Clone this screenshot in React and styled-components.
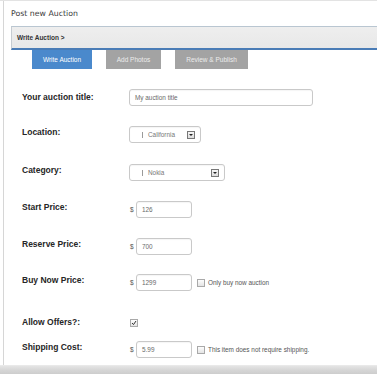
import React from 'react';
import styled, { createGlobalStyle } from 'styled-components';

const GlobalStyle = createGlobalStyle`
  html, body {
    margin: 0;
    padding: 0;
    background: #ffffff;
  }
  * {
    box-sizing: border-box;
  }
`;

const Page = styled.div`
  height: 374px;
  display: flex;
  flex-direction: column;
  overflow: hidden;
  border-top: 1px solid #e3e3e3;
  background: #fff;
  font-family: "Liberation Sans", Arial, sans-serif;
`;

const Panel = styled.div`
  flex: 1;
  margin-left: 3px;
  border-left: 1px solid #d6d6d6;
  padding-left: 7px;
  display: flex;
  flex-direction: column;
`;

const Title = styled.div`
  height: 25px;
  display: flex;
  align-items: center;
  font-family: "DejaVu Sans", Verdana, sans-serif;
  font-size: 7.8px;
  color: #3c3c3c;
`;

const Crumbs = styled.div`
  height: 24px;
  display: flex;
  align-items: center;
  padding-left: 5px;
  background: linear-gradient(#eeeeee, #e8e8e8);
  border-top: 1px solid #b9c6d1;
  border-left: 1px solid #c6ccd2;
  border-bottom: 2px solid #4a7cb6;
  font-size: 6.5px;
  font-weight: bold;
  color: #333;
`;

const Tabs = styled.div`
  display: flex;
  gap: 14px;
  padding-left: 21px;
`;

const Tab = styled.div`
  width: ${p => p.$w}px;
  height: 19px;
  display: flex;
  align-items: center;
  justify-content: center;
  font-size: 6.5px;
  color: ${p => (p.$active ? '#ffffff' : '#ececec')};
  background: ${p => (p.$active ? '#4a89cc' : '#a3a3a3')};
`;

const Form = styled.div`
  margin-top: 20px;
  padding-left: 11px;
  display: flex;
  flex-direction: column;
`;

const Row = styled.div`
  height: ${p => p.$h}px;
  display: flex;
  align-items: flex-start;
`;

const Label = styled.div`
  width: 107px;
  font-size: 8.5px;
  font-weight: bold;
  line-height: 13px;
  color: #262626;
  margin-top: ${p => p.$mt || 0}px;
`;

const Field = styled.div`
  display: flex;
  align-items: center;
  height: ${p => p.$h || 17}px;
`;

const Input = styled.div`
  width: ${p => p.$w}px;
  height: ${p => p.$h || 17}px;
  display: flex;
  align-items: center;
  padding-left: 5px;
  border: 1px solid #c9c9c9;
  border-radius: 3px;
  box-shadow: inset 0 1px 1px rgba(0, 0, 0, 0.04);
  font-size: 6.4px;
  color: #6a6a6a;
  background: #fff;
`;

const Select = styled(Input)`
  padding-left: 12px;
  padding-right: 5px;
  justify-content: space-between;
`;

const Option = styled.span`
  display: flex;
  align-items: center;
  color: #777;
  &::before {
    content: '';
    width: 1px;
    height: 6px;
    background: #9a9a9a;
    margin-right: 5px;
  }
`;

const Arrow = styled.div`
  width: 8px;
  height: 8px;
  border: 1px solid #777;
  background: linear-gradient(#f6f6f6, #dcdcdc);
  display: flex;
  align-items: center;
  justify-content: center;
  &::after {
    content: '';
    border-left: 2px solid transparent;
    border-right: 2px solid transparent;
    border-top: 2px solid #222;
  }
`;

const Dollar = styled.span`
  font-size: 6.5px;
  color: #555;
  width: 6px;
  margin-left: 1px;
`;

const Check = styled.div`
  width: 8px;
  height: 8px;
  border: 1px solid #a9a9a9;
  background: linear-gradient(#fdfdfd, #e4e4e4);
  display: flex;
  align-items: center;
  justify-content: center;
  margin-left: ${p => p.$ml || 0}px;
`;

const CheckText = styled.span`
  font-size: 6.4px;
  color: #555;
  margin-left: 3px;
`;

const Bottom = styled.div`
  height: 9px;
  background: linear-gradient(#e4e4e4, #d6d6d6 50%, #cdcdcd);
  border-top: 1px solid #e9e9e9;
`;

const Tick = () => (
  <svg width="6" height="6" viewBox="0 0 6 6">
    <path d="M1 3 L2.5 4.6 L5 1" fill="none" stroke="#333" strokeWidth="1" />
  </svg>
);

const priceRow = (label, value, h, extra) => (
  <Row $h={h}>
    <Label>{label}</Label>
    <Field>
      <Dollar>$</Dollar>
      <Input $w={56} $h={17}>{value}</Input>
      {extra && (
        <>
          <Check $ml={5} />
          <CheckText>{extra}</CheckText>
        </>
      )}
    </Field>
  </Row>
);

export default function App() {
  return (
    <>
      <GlobalStyle />
      <Page>
        <Panel>
          <Title>Post new Auction</Title>
          <Crumbs>Write Auction &gt;</Crumbs>
          <Tabs>
            <Tab $w={60} $active>Write Auction</Tab>
            <Tab $w={55}>Add Photos</Tab>
            <Tab $w={73}>Review &amp; Publish</Tab>
          </Tabs>
          <Form>
            <Row $h={37}>
              <Label $mt={2}>Your auction title:</Label>
              <Field>
                <Input $w={184}>My auction title</Input>
              </Field>
            </Row>
            <Row $h={38}>
              <Label>Location:</Label>
              <Field>
                <Select $w={72}>
                  <Option>California</Option>
                  <Arrow />
                </Select>
              </Field>
            </Row>
            <Row $h={37}>
              <Label>Category:</Label>
              <Field>
                <Select $w={96}>
                  <Option>Nokia</Option>
                  <Arrow />
                </Select>
              </Field>
            </Row>
            {priceRow('Start Price:', '126', 37)}
            {priceRow('Reserve Price:', '700', 36)}
            {priceRow('Buy Now Price:', '1299', 42, 'Only buy now auction')}
            <Row $h={25}>
              <Label>Allow Offers?:</Label>
              <Field $h={13}>
                <Check $ml={1}>
                  <Tick />
                </Check>
              </Field>
            </Row>
            {priceRow('Shipping Cost:', '5.99', 24, 'This item does not require shipping.')}
          </Form>
        </Panel>
        <Bottom />
      </Page>
    </>
  );
}
